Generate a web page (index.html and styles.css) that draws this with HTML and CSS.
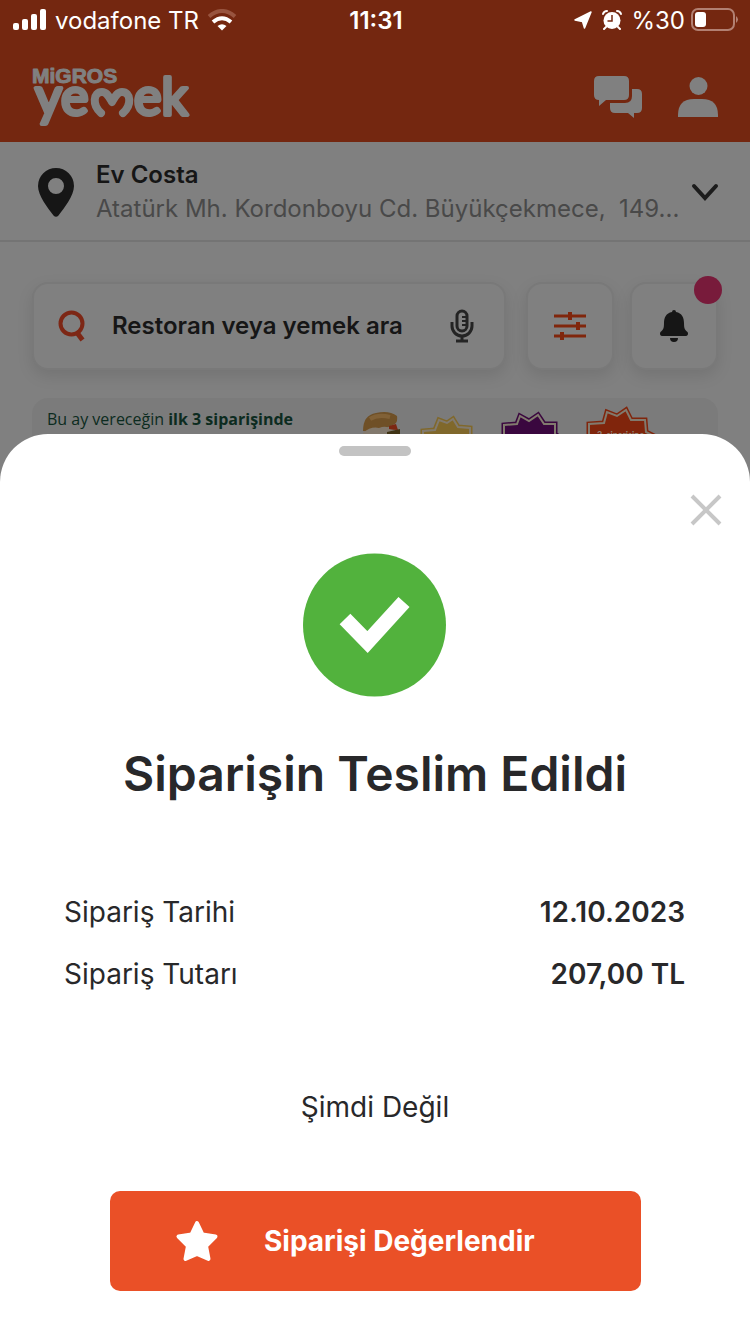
FILE: index.html
```html
<!DOCTYPE html>
<html lang="tr">
<head>
<meta charset="utf-8">
<meta name="viewport" content="width=device-width, initial-scale=1">
<title>Migros Yemek</title>
<link rel="stylesheet" href="styles.css">
</head>
<body>
<header class="header">
  <div class="status">
    <div class="status-side">
      <svg width="34" height="22" viewBox="0 0 34 22" fill="#fff"><rect x="0" y="14" width="6" height="7" rx="2"/><rect x="9" y="10" width="6" height="11" rx="2"/><rect x="18" y="5" width="6" height="16" rx="2"/><rect x="27" y="0" width="6" height="21" rx="2"/></svg>
      <span>vodafone TR</span>
      <svg width="30" height="22" viewBox="0 0 30 22" fill="none" stroke="#fff" stroke-width="4"><path d="M2 7.500Q15-3.500 28 7.500" stroke="#98543f"/><path d="M6 13Q15 5.500 24 13"/><path d="M15 21.500l-4.500-4.500q4.500-3.500 9 0z" fill="#fff" stroke="none"/></svg>
    </div>
    <time class="clock">11:31</time>
    <div class="status-side status-end">
      <svg width="18" height="20" viewBox="0 0 18 20" fill="#fff" stroke="#fff" stroke-width="1.500" stroke-linejoin="round"><path d="M17 2L10.500 18 8.500 11.500 1 10z"/></svg>
      <svg class="alarm" width="20" height="20" viewBox="0 0 20 20"><circle cx="10" cy="10.500" r="8.500" fill="#fff"/><path d="M1 4Q2 1 5 1M19 4Q18 1 15 1M4 17l-2 2M16 17l2 2" fill="none" stroke="#fff" stroke-width="2" stroke-linecap="round"/><path d="M10 5v6H5.500" fill="none" stroke="#742710" stroke-width="1.500"/></svg>
      <span>%30</span>
      <svg width="48" height="24" viewBox="0 0 48 24"><rect x="1" y="1" width="42" height="21" rx="6" fill="none" stroke="#b28072" stroke-width="2"/><rect x="4" y="4" width="11" height="15" rx="3" fill="#fff"/><path d="M45 8q4 3.500 0 7z" fill="#b28072"/></svg>
    </div>
  </div>
  <div class="brand-bar">
    <svg class="logo" width="160" height="62" viewBox="0 0 160 62" role="img" aria-label="Migros Yemek">
      <text class="logo-top" x="0" y="17">MiGROS</text>
      <text class="logo-main" x="3" y="49">ye</text>
      <path class="logo-heart" d="M69 47C60 39 61 26 70 26c5 0 7 5 10 10 3-5 5-10 10-10 9 0 10 13 1 21"/>
      <text class="logo-main" x="102" y="49">ek</text>
    </svg>
    <div class="brand-actions">
      <button class="plain" aria-label="Mesajlar"><svg width="48" height="43" viewBox="0 0 48 43" fill="#808080"><path d="M5 0h25q5 0 5 5v14q0 5-5 5H12l-7 6v-6q-5 0-5-5V5q0-5 5-5z"/><path d="M38 13h5q5 0 5 5v14q0 5-5 5h-3v5l-6-5H21q-5 0-5-5v-5h15q7 0 7-7z"/></svg></button>
      <button class="plain" aria-label="Hesabım"><svg width="40" height="40" viewBox="0 0 40 40" fill="#808080"><circle cx="20.500" cy="9" r="9"/><path d="M0 40v-2q0-16 16-16h8q16 0 16 16v2z"/></svg></button>
    </div>
  </div>
</header>

<button class="address">
  <svg class="pin" width="36" height="49" viewBox="0 0 36 49"><path fill="#161616" fill-rule="evenodd" d="M18 0a18 18 0 0 1 18 18c0 10-10 22-15.500 29.500q-2.500 2.500-5 0C10 40 0 28 0 18A18 18 0 0 1 18 0zm0 10a8 8 0 1 0 0 16 8 8 0 0 0 0-16z"/></svg>
  <span class="address-text">
    <strong>Ev Costa</strong>
    <span>Atatürk Mh. Kordonboyu Cd. Büyükçekmece,&nbsp; 149...</span>
  </span>
  <svg width="28" height="18" viewBox="0 0 28 18" fill="none" stroke="#1c1c1c" stroke-width="4" stroke-linecap="round"><path d="M3 3l11 12L25 3"/></svg>
</button>

<main class="home">
  <div class="tools">
    <div class="search">
      <svg width="28" height="32" viewBox="0 0 28 32" fill="none" stroke="#7d2715" stroke-width="4"><circle cx="13.500" cy="13.500" r="11"/><path d="M18.500 22l6 8" stroke-width="5"/></svg>
      <input type="text" aria-label="Restoran veya yemek ara" placeholder="Restoran veya yemek ara">
      <button class="plain" aria-label="Sesli arama"><svg width="24" height="34" viewBox="0 0 24 34" fill="none" stroke="#242424" stroke-width="3"><rect x="7" y="2" width="10" height="20" rx="5"/><path d="M2 13v4a10 10 0 0 0 20 0v-4M12 27v5M6 32h12"/><path d="M12 8h5M12 12h5M12 16h5" stroke-width="2"/></svg></button>
    </div>
    <button class="tool" aria-label="Filtrele"><svg width="32" height="28" viewBox="0 0 32 28" fill="none" stroke="#80260c"><path d="M0 4h32M0 14h32M0 24h32" stroke-width="3"/><path d="M16 0v8M24 10v8M8 20v8" stroke-width="4"/></svg></button>
    <button class="tool" aria-label="Bildirimler"><svg width="28" height="32" viewBox="0 0 28 32" fill="#161616"><path d="M14 0q2 0 2 2c6 1 8 6 8 11 0 6 1 7 3.500 9 1 1.500.5 4-1.500 4H2c-2 0-2.500-2.500-1.500-4C3 20 4 19 4 13 4 8 6 3 12 2q0-2 2-2zM10 28h8q0 4-4 4t-4-4z"/></svg><span class="dot"></span></button>
  </div>
  <section class="promo">
    <p>Bu ay vereceğin <b>ilk 3 siparişinde</b></p>
    <svg width="300" height="60" viewBox="0 0 300 60">
      <path d="M5 27Q5 11 18 9q13-3 21 3 1 5-2 8l-18 8z" fill="#6f5027"/>
      <path d="M12 15q8-5 20-2" fill="none" stroke="#816137" stroke-width="4"/>
      <path d="M5 29q8-7 16-5 7-3 12 1l7 9H5z" fill="#82796d"/>
      <path d="M31 22l7-2 2 6q-5 0-9-1z" fill="#7c2712"/>
      <path d="M29 28l13-3v9H29z" fill="#403415"/>
      <g class="yellow"><path class="rim" d="M65 60V27l12-1 4-10 8 3 6-4 5 8 12 1v36z"/><path class="band" d="M65 60V27l12-1 4-10 8 3 6-4 5 8 12 1v36z"/></g>
      <g class="purple"><path class="rim" d="M146 60V21l13-1 3-8 9 5 9-6 6 9h11v10l8 6v24z"/><path class="band" d="M146 60V21l13-1 3-8 9 5 9-6 6 9h11v10l8 6v24z"/></g>
      <g class="red"><path class="rim" d="M231 60V20l15-1 3-11 10 4 9-6 5 10h14l1 12 10 5v27z"/><path class="band" d="M231 60V20l15-1 3-11 10 4 9-6 5 10h14l1 12 10 5v27z"/></g>
      <text x="239" y="34" class="badge-text">3. siparişine</text>
    </svg>
  </section>
</main>

<section class="sheet" role="dialog" aria-labelledby="title">
  <div class="handle"></div>
  <button class="plain close" aria-label="Kapat"><svg width="32" height="32" viewBox="0 0 32 32" stroke="#c7c7c7" stroke-width="4"><path d="M2 2l28 28M30 2L2 30"/></svg></button>
  <svg class="check" width="144" height="144" viewBox="0 0 144 144"><circle cx="71.500" cy="72" r="71.500" fill="#52b23d"/><path d="M42 66l22.500 23L101 49" fill="none" stroke="#fff" stroke-width="15"/></svg>
  <h1 id="title">Siparişin Teslim Edildi</h1>
  <dl class="details">
    <div><dt>Sipariş Tarihi</dt><dd>12.10.2023</dd></div>
    <div><dt>Sipariş Tutarı</dt><dd>207,00 TL</dd></div>
  </dl>
  <button class="plain later">Şimdi Değil</button>
  <button class="rate">
    <svg width="44" height="42" viewBox="0 0 44 42"><path fill="#fff" stroke="#fff" stroke-width="4" stroke-linejoin="round" d="M22 3l5.500 11.500 13 2-9.500 9.500 2.500 13L22 34 10.500 39 13 26l-9.500-9.500 13-2z"/></svg>
    <span>Siparişi Değerlendir</span>
  </button>
</section>
</body>
</html>
```
FILE: styles.css
```css
* { box-sizing: border-box; }
body {
  margin: 0;
  min-height: 100vh;
  display: flex;
  flex-direction: column;
  background: #808080;
  color: #161616;
  font-family: Inter, "Liberation Sans", sans-serif;
  font-size: 24px;
}
button, input { font: inherit; color: inherit; }
button { cursor: pointer; }
svg { display: block; flex: none; }
.plain { border: 0; padding: 0; background: none; }

.header { background: #742710; }
.status {
  display: grid;
  grid-template-columns: 1fr auto 1fr;
  align-items: center;
  height: 40px;
  padding: 0 11px 0 13px;
  color: #fff;
}
.status-side { display: flex; align-items: center; gap: 8px; }
.status-end { justify-content: flex-end; gap: 6px; }
.status-end .alarm { margin: 0 3px 0 4px; }
.clock { font-weight: 600; }
.brand-bar {
  display: flex;
  justify-content: space-between;
  align-items: center;
  height: 102px;
  padding: 12px 32px 0;
}
.logo { fill: #808080; stroke: #808080; stroke-linejoin: round; stroke-linecap: round; overflow: visible; }
.logo-top { font: 700 21px "Liberation Sans", sans-serif; stroke-width: 1px; }
.logo-main { font: 400 52px Lato, sans-serif; stroke-width: 4px; }
.logo-heart { fill: none; stroke-width: 8px; }
.brand-actions { display: flex; align-items: center; gap: 36px; }

.address {
  display: flex;
  align-items: center;
  gap: 14px;
  height: 100px;
  padding: 2px 31px 0 38px;
  border: 0;
  border-bottom: 2px solid #747474;
  background: none;
  text-align: left;
}
.pin { margin-right: 8px; }
.address-text { flex: 1; min-width: 0; display: flex; flex-direction: column; line-height: 34px; color: #494949; white-space: nowrap; }
.address-text strong { font-weight: 600; color: #161616; }

.home { padding: 40px 32px 0; }
.tools { display: flex; gap: 20px; }
.search, .tool {
  height: 88px;
  border: 2px solid #797979;
  border-radius: 16px;
  background: #808080;
  box-shadow: 0 6px 16px rgba(0, 0, 0, 0.1);
}
.search { flex: 1; min-width: 0; display: flex; align-items: center; padding: 0 30px 0 24px; gap: 26px; }
.search input { flex: 1; min-width: 0; padding: 0 0 2px; border: 0; outline: 0; background: none; font-weight: 600; }
.search input::placeholder { color: #161616; opacity: 1; }
.tool { position: relative; display: grid; place-items: center; width: 88px; padding: 0; }
.tool + .tool { margin-left: -4px; }
.dot { position: absolute; top: -8px; right: -6px; width: 28px; height: 28px; border-radius: 50%; background: #781b3b; }
.promo {
  display: flex;
  justify-content: space-between;
  height: 84px;
  margin-top: 28px;
  padding: 6px 60px 0 15px;
  border-radius: 16px;
  background: #7b7b7b;
  overflow: hidden;
}
.promo p { margin: 3px 0 0; font: 16px/24px "Open Sans", sans-serif; color: #0c2b20; white-space: nowrap; }
.badge-text { font: 700 9px Lato, sans-serif; fill: #948b80; stroke: none; }
.rim { stroke-width: 5px; }
.band { stroke: #817a6e; stroke-width: 2px; }
.yellow { fill: #80682b; stroke: #80682b; }
.purple { fill: #3a073f; stroke: #3a073f; }
.red { fill: #80250c; stroke: #80250c; }

.sheet {
  position: relative;
  flex: 1;
  display: flex;
  flex-direction: column;
  align-items: center;
  margin-top: -48px;
  padding: 12px 28px 43px;
  border-radius: 48px 48px 0 0;
  background: #fff;
  color: #28282a;
  font-size: 28px;
}
.handle { width: 72px; height: 10px; border-radius: 5px; background: #c3c3c3; }
.close { align-self: flex-end; margin-top: 38px; }
.check { margin-top: 27px; }
h1 { margin: 45px 0 0; font-size: 48px; line-height: 64px; font-weight: 600; text-align: center; }
.details { align-self: stretch; display: grid; gap: 28px; margin: 89px 37px 0 36px; line-height: 34px; }
.details div { display: flex; justify-content: space-between; }
.details dd { margin: 0; font-weight: 600; }
.later { margin-top: 99px; line-height: 34px; }
.rate {
  display: flex;
  align-items: center;
  gap: 45px;
  align-self: stretch;
  height: 100px;
  margin: auto 81px 0 82px;
  padding: 0 65px;
  border: 0;
  border-radius: 10px;
  background: #ea5027;
  color: #fff;
  font-weight: 700;
}
```
